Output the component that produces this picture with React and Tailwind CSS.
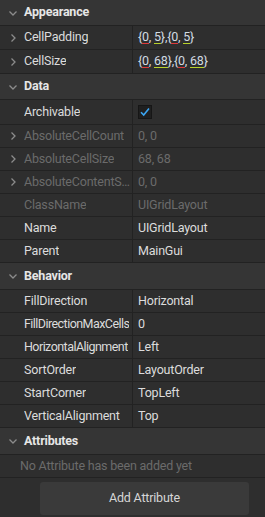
const Chevron = ({ down }) => (
  <svg width="10" height="10" viewBox="0 0 10 10" className="shrink-0">
    {down ? (
      <path d="M1.5 3.5 L5 7 L8.5 3.5" fill="none" stroke="#8c8c8c" strokeWidth="1.3" />
    ) : (
      <path d="M3.5 1.5 L7 5 L3.5 8.5" fill="none" stroke="#8c8c8c" strokeWidth="1.3" />
    )}
  </svg>
);

const Header = ({ title, h }) => (
  <div className={`flex items-center bg-[#353535] border-b border-[#222222] ${h}`}>
    <div className="w-[24px] flex justify-center pl-[1px]">
      <Chevron down />
    </div>
    <span className="font-bold text-[#e6e6e6]">{title}</span>
  </div>
);

const Row = ({ name, value, expand, disabled, tight, h = "h-[23px]", children }) => (
  <div className={`flex border-b border-[#222222] ${h}`}>
    <div className="w-[133px] flex items-center border-r border-[#222222] overflow-hidden">
      <div className="w-[24px] shrink-0 flex justify-center pl-[1px]">{expand && <Chevron />}</div>
      <span
        className={`truncate ${tight ? "tracking-[-0.55px]" : ""} ${disabled ? "text-[#6b6b6b]" : "text-[#dcdcdc]"}`}
      >
        {name}
      </span>
    </div>
    <div className={`flex-1 flex items-center pl-[5px] ${disabled ? "text-[#6b6b6b]" : "text-[#dcdcdc]"}`}>
      {children || value}
    </div>
  </div>
);

const U = ({ c, children }) => (
  <span className="relative">
    {children}
    <span className={`absolute left-0 right-0 bottom-[0px] h-[1px] ${c}`} />
  </span>
);

const Udim = ({ a, b }) => (
  <span className="text-[#d2dbe2]">
    {"{"}
    <U c="bg-[#e03a3a]">0</U>, <U c="bg-[#b7d12a]">{a}</U>
    {"},{"}
    <U c="bg-[#e03a3a]">0</U>, <U c="bg-[#b7d12a]">{b}</U>
    {"}"}
  </span>
);

export default function App() {
  return (
    <div
      className="w-[265px] h-[517px] bg-[#2e2e2e] text-[12.5px] tracking-[-0.2px] overflow-hidden"
      style={{ fontFamily: "Roboto, 'Liberation Sans', sans-serif" }}
    >
      <Header title="Appearance" h="h-[26px]" />
      <Row name="CellPadding" expand h="h-[24px]">
        <Udim a="5" b="5" />
      </Row>
      <Row name="CellSize" expand h="h-[24px]">
        <Udim a="68" b="68" />
      </Row>
      <Header title="Data" h="h-[26px]" />
      <Row name="Archivable" h="h-[25px]">
        <div className="w-[14px] h-[14px] bg-[#1f1f1f] border border-[#161616] flex items-center justify-center">
          <svg width="12" height="12" viewBox="0 0 12 12">
            <path d="M2 6.3 L4.7 9 L10 2.5" fill="none" stroke="#3ba5f2" strokeWidth="1.6" />
          </svg>
        </div>
      </Row>
      <Row name="AbsoluteCellCount" value="0, 0" expand disabled />
      <Row name="AbsoluteCellSize" value="68, 68" expand disabled />
      <Row name="AbsoluteContentSize" value="0, 0" expand disabled />
      <Row name="ClassName" value="UIGridLayout" disabled />
      <Row name="Name" value="UIGridLayout" />
      <Row name="Parent" value="MainGui" />
      <Header title="Behavior" h="h-[27px]" />
      <Row name="FillDirection" value="Horizontal" />
      <Row name="FillDirectionMaxCells" value="0" tight />
      <Row name="HorizontalAlignment" value="Left" tight />
      <Row name="SortOrder" value="LayoutOrder" />
      <Row name="StartCorner" value="TopLeft" />
      <Row name="VerticalAlignment" value="Top" />
      <Header title="Attributes" h="h-[27px]" />
      <div className="h-[23px] flex items-center pl-[20px] border-b border-[#222222] text-[#6b6b6b]">
        No Attribute has been added yet
      </div>
      <div className="pt-[4px] pl-[40px] pr-[16px]">
        <button className="w-full h-[33px] bg-[#3a3a3a] rounded-[3px] text-[#d6d6d6]">Add Attribute</button>
      </div>
    </div>
  );
}
